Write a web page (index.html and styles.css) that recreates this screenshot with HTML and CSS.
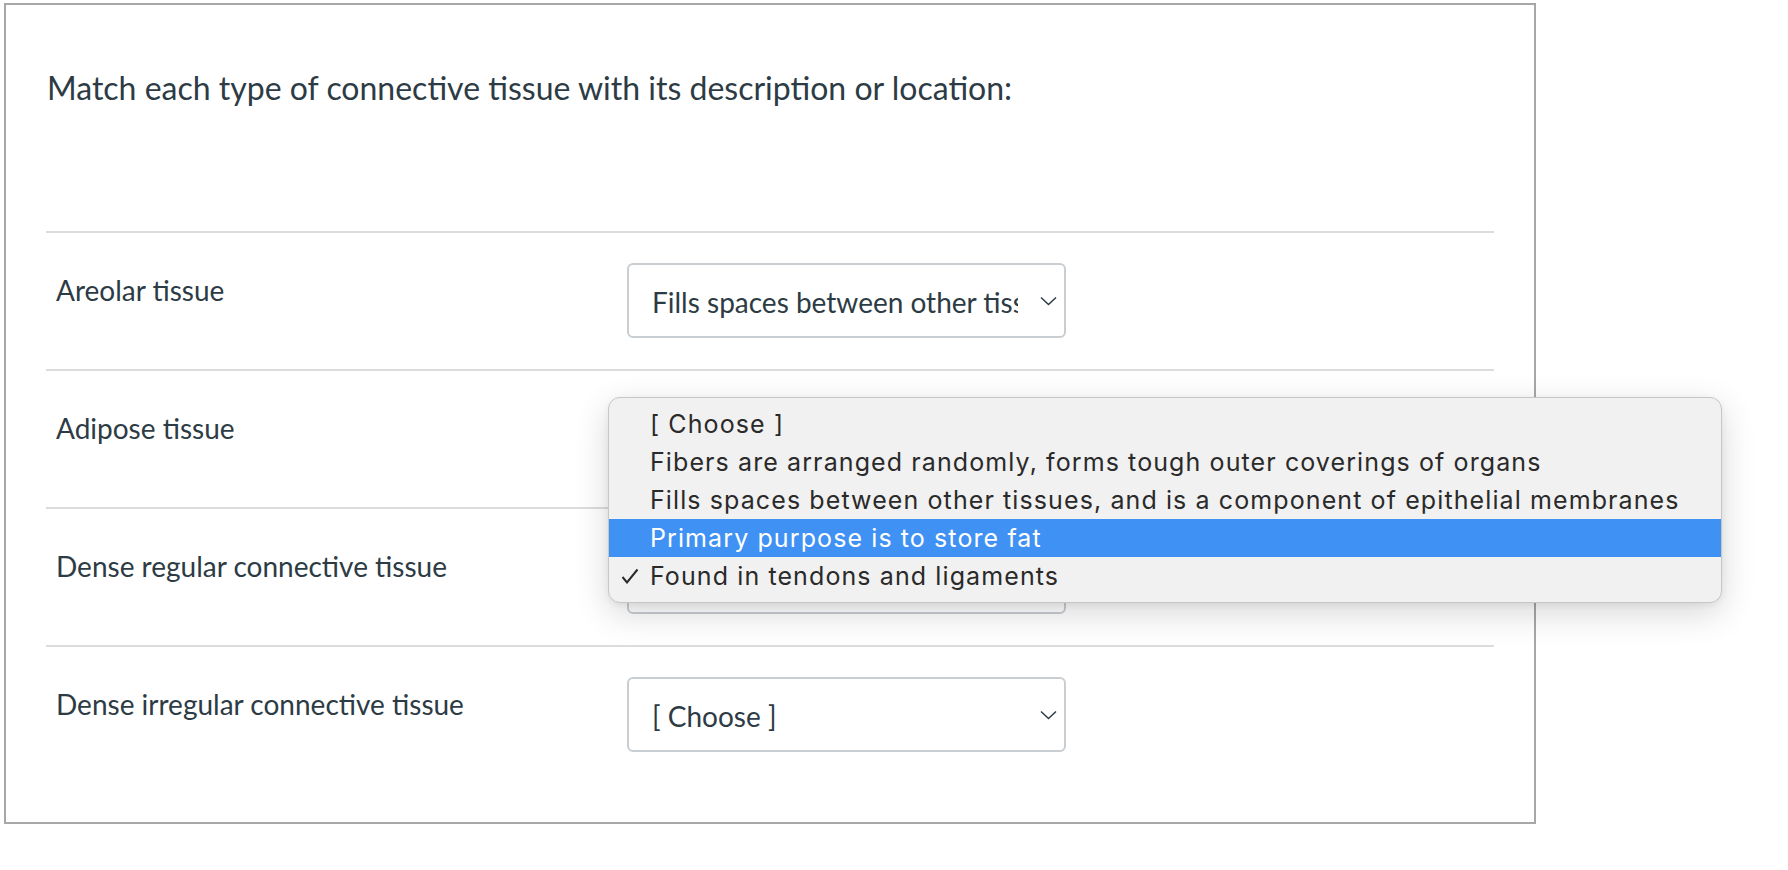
FILE: index.html
```html
<!DOCTYPE html>
<html lang="en">

<head>
    <meta charset="UTF-8">
    <meta name="viewport" content="width=device-width, initial-scale=1.0">
    <title>Matching Question</title>
    <link rel="stylesheet" href="styles.css">
</head>

<body>
    <div class="quiz-box">
        <div class="question-text">Match each type of connective tissue with its description or location:</div>

        <div class="answers">
            <div class="answer-row">
                <div class="answer-label">Areolar tissue</div>
                <div class="select-box">
                    <span class="select-value">Fills spaces between other tissues, and is a component of epithelial membranes</span>
                    <svg class="chevron" width="17" height="10" viewBox="0 0 17 10"><polyline points="1,1.5 8.5,8.5 16,1.5" /></svg>
                </div>
            </div>
            <div class="answer-row">
                <div class="answer-label">Adipose tissue</div>
                <!-- covered by the open menu -->
                <div class="select-box">
                    <span class="select-value"></span>
                    <svg class="chevron" width="17" height="10" viewBox="0 0 17 10"><polyline points="1,1.5 8.5,8.5 16,1.5" /></svg>
                </div>
            </div>
            <div class="answer-row">
                <div class="answer-label">Dense regular connective tissue</div>
                <div class="select-box">
                    <span class="select-value"></span>
                    <svg class="chevron" width="17" height="10" viewBox="0 0 17 10"><polyline points="1,1.5 8.5,8.5 16,1.5" /></svg>
                </div>
            </div>
            <div class="answer-row">
                <div class="answer-label">Dense irregular connective tissue</div>
                <div class="select-box">
                    <span class="select-value">[ Choose ]</span>
                    <svg class="chevron" width="17" height="10" viewBox="0 0 17 10"><polyline points="1,1.5 8.5,8.5 16,1.5" /></svg>
                </div>
            </div>
        </div>

        <!-- open dropdown of the "Dense regular" select -->
        <ul class="select-menu">
            <li>[ Choose ]</li>
            <li>Fibers are arranged randomly, forms tough outer coverings of organs</li>
            <li>Fills spaces between other tissues, and is a component of epithelial membranes</li>
            <li class="active">Primary purpose is to store fat</li>
            <li class="checked">
                <svg class="check" width="18" height="16" viewBox="0 0 18 16"><polyline points="1.5,9 6,14.5 16.5,1.5" /></svg>
                Found in tendons and ligaments
            </li>
        </ul>
    </div>
</body>

</html>
```

FILE: styles.css
```css
body {
    margin: 0;
    font-family: Lato, "Open Sans", sans-serif;
    color: #2d3b45;
    background-color: #fff;
}

.quiz-box {
    position: relative;
    box-sizing: border-box;
    width: 1532px;
    height: 821px;
    margin: 3px 0 0 4px;
    padding: 0 40px 39px;
    border: 2px solid #a7a7a7;
}

.question-text {
    padding-top: 63px;
    margin-bottom: 123px;
    padding-left: 1px;
    font-size: 32px;
    line-height: 40px;
}

.answer-row {
    display: flex;
    align-items: flex-start;
    height: 75px;
    padding: 30px 0 31px;
    border-top: 2px solid #dcdcdc;
}

.answer-label {
    width: 571px;
    padding: 9px 0 0 10px;
    font-size: 28px;
    line-height: 36px;
}

.select-box {
    display: flex;
    align-items: center;
    box-sizing: border-box;
    width: 439px;
    height: 75px;
    padding: 3px 7px 0 23px;
    border: 2px solid #c9ced2;
    border-radius: 6px;
    background-color: #fff;
}

.select-value {
    flex: 1;
    overflow: hidden;
    white-space: nowrap;
    margin-right: 22px;
    font-size: 28px;
}

.chevron {
    margin-top: -3px;
    fill: none;
    stroke: #2d3b45;
    stroke-width: 1.5;
}

.select-menu {
    position: absolute;
    top: 392px;
    left: 602px;
    width: 1114px;
    box-sizing: border-box;
    margin: 0;
    padding: 7px 0;
    list-style: none;
    border: 1px solid #c6c6c6;
    border-radius: 12px;
    background-color: #f1f1f1;
    box-shadow: 0 10px 34px rgba(0, 0, 0, 0.16), 0 2px 6px rgba(0, 0, 0, 0.06);
    font-family: Inter, "Liberation Sans", sans-serif;
    font-size: 25px;
    letter-spacing: 1.1px;
    color: #2a2a2a;
}

.select-menu li {
    position: relative;
    height: 38px;
    line-height: 38px;
    padding-left: 41px;
    white-space: nowrap;
}

.select-menu li.active {
    background-color: #3f91f3;
    color: #fff;
}

.check {
    position: absolute;
    left: 12px;
    top: 11px;
    fill: none;
    stroke: #2a2a2a;
    stroke-width: 2;
}
```
